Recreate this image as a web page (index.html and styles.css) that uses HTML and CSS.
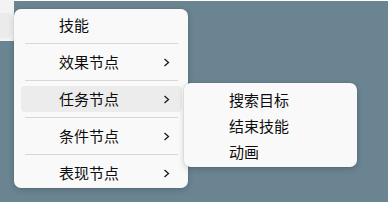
FILE: index.html
```html
<!DOCTYPE html>
<html lang="zh-CN">

<head>
    <meta charset="UTF-8">
    <meta name="viewport" content="width=device-width, initial-scale=1.0">
    <title>节点菜单</title>
    <link rel="stylesheet" href="styles.css">
</head>

<body>
    <div class="desktop">
        <div class="back-window">
            <div class="back-item"></div>
        </div>

        <div class="menu main-menu">
            <div class="menu-item">技能</div>
            <div class="separator"></div>
            <div class="menu-item">
                <span>效果节点</span>
                <svg class="chevron" width="7" height="9" viewBox="0 0 7 9"><path d="M1.5 1 L5.5 4.5 L1.5 8" /></svg>
            </div>
            <div class="separator"></div>
            <div class="menu-item active">
                <span>任务节点</span>
                <svg class="chevron" width="7" height="9" viewBox="0 0 7 9"><path d="M1.5 1 L5.5 4.5 L1.5 8" /></svg>
            </div>
            <div class="separator"></div>
            <div class="menu-item">
                <span>条件节点</span>
                <svg class="chevron" width="7" height="9" viewBox="0 0 7 9"><path d="M1.5 1 L5.5 4.5 L1.5 8" /></svg>
            </div>
            <div class="separator"></div>
            <div class="menu-item">
                <span>表现节点</span>
                <svg class="chevron" width="7" height="9" viewBox="0 0 7 9"><path d="M1.5 1 L5.5 4.5 L1.5 8" /></svg>
            </div>
        </div>

        <div class="menu sub-menu">
            <div class="menu-item">搜索目标</div>
            <div class="menu-item">结束技能</div>
            <div class="menu-item">动画</div>
        </div>
    </div>
</body>

</html>
```

FILE: styles.css
```css
* {
    margin: 0;
    padding: 0;
    box-sizing: border-box;
    font-family: 'Microsoft YaHei UI', 'Noto Sans CJK SC', 'Noto Sans', sans-serif;
}

:root {
    --desk: #6b8492;
    --menu-bg: #f9f9f9;
    --hover: #ececec;
    --line: #d8d8d8;
    --text: #0d0d0d;
}

html {
    background: white;
}

body {
    width: 390px;
    height: 203px;
    overflow: hidden;
}

.desktop {
    position: relative;
    height: 201px;
    margin: 1px 2px 1px 0;
    background: var(--desk);
}

.back-window {
    position: absolute;
    left: 0;
    top: -1px;
    width: 14px;
    height: 41px;
    background: #f3f3f3;
}

.back-item {
    margin-top: 13px;
    width: 12px;
    height: 25px;
    background: #ebebeb;
    border-radius: 0 5px 5px 0;
}

.menu {
    position: absolute;
    background: var(--menu-bg);
    border-radius: 7px;
    padding: 3px 0 2px;
    box-shadow: 0 2px 6px rgba(0, 0, 0, 0.18), 0 0 0 1px rgba(0, 0, 0, 0.04);
}

.main-menu {
    left: 14px;
    top: 8px;
    width: 174px;
}

.sub-menu {
    left: 184px;
    top: 82px;
    width: 173px;
    padding: 4px 0 2px;
}

.menu-item {
    display: flex;
    align-items: center;
    justify-content: space-between;
    height: 26px;
    margin: 0 6px 0 7px;
    padding: 0 12px 0 38px;
    border-radius: 4px;
    font-size: 15px;
    line-height: 26px;
    color: var(--text);
}

.menu-item.active {
    background: var(--hover);
}

.separator {
    height: 1px;
    margin: 5px 10px 5px 11px;
    background: var(--line);
}

.chevron path {
    fill: none;
    stroke: #1a1a1a;
    stroke-width: 1.3;
}
```
